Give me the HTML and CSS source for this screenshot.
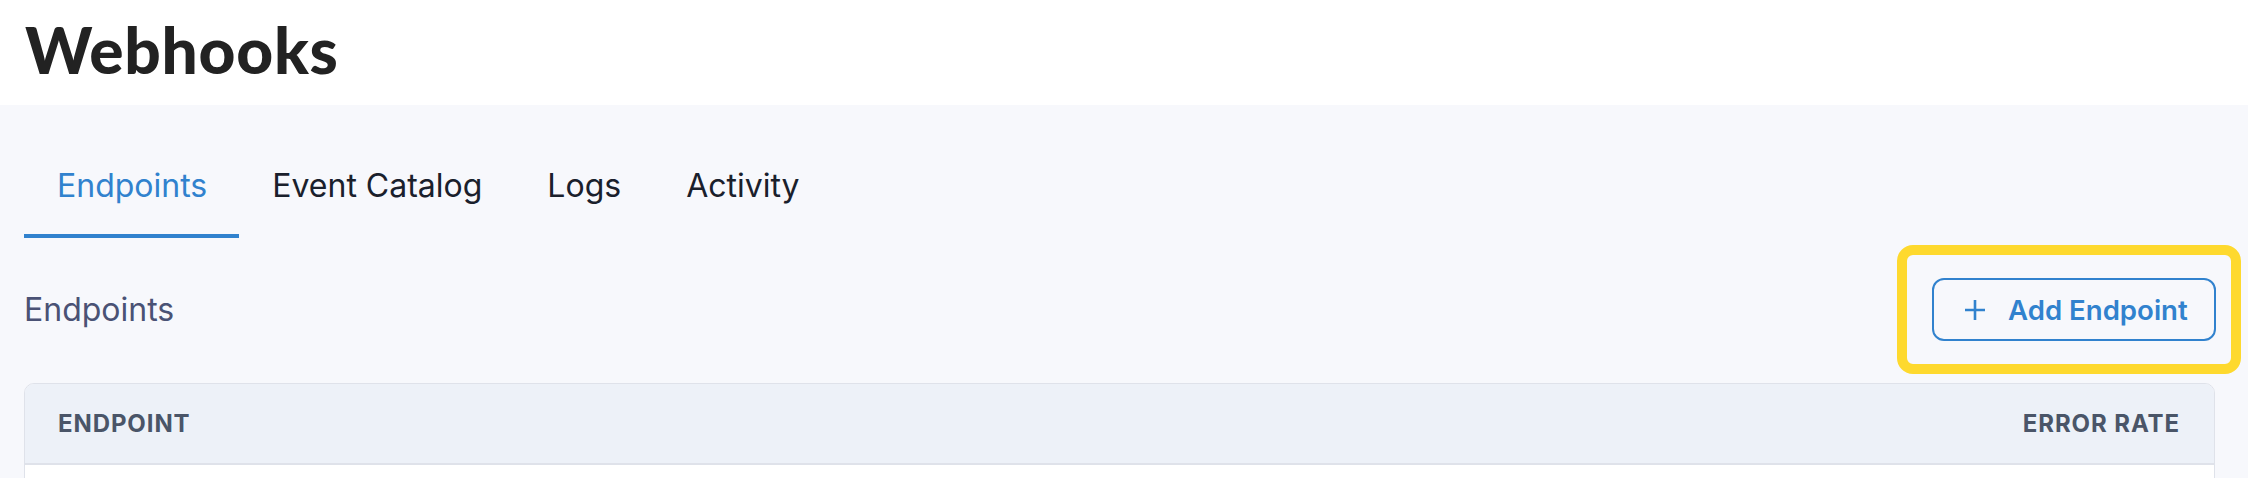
FILE: index.html
```html
<!DOCTYPE html>
<html lang="en">
<head>
<meta charset="utf-8">
<title>Webhooks</title>
<link rel="stylesheet" href="styles.css">
</head>
<body>
  <header class="topbar">
    <h1 class="page-title">Webhooks</h1>
  </header>
  <main class="content">
    <nav class="tabs">
      <a class="tab tab-active">Endpoints</a>
      <a class="tab">Event Catalog</a>
      <a class="tab">Logs</a>
      <a class="tab">Activity</a>
    </nav>
    <div class="section-head">
      <h2 class="section-title">Endpoints</h2>
      <div class="btn-wrap">
        <button class="btn-add">
          <svg class="plus" width="22" height="22" viewBox="0 0 22 22"><path d="M11 1v20M1 11h20" stroke="#3182ce" stroke-width="2.6" fill="none"/></svg>
          <span>Add Endpoint</span>
        </button>
        <span class="highlight"></span>
      </div>
    </div>
    <section class="card">
      <div class="card-head">
        <span class="col">Endpoint</span>
        <span class="col">Error Rate</span>
      </div>
      <div class="card-body"></div>
    </section>
  </main>
</body>
</html>
```
FILE: styles.css
```css
html, body {
  margin: 0;
  padding: 0;
}
body {
  background: #f7f8fc;
  font-family: Inter, "Noto Sans", sans-serif;
  overflow: hidden;
}
.topbar {
  background: #ffffff;
  height: 105px;
  box-sizing: border-box;
  padding: 18px 0 0 25px;
}
.page-title {
  margin: 0;
  font-family: Lato, "Noto Sans", sans-serif;
  font-weight: 900;
  font-size: 64px;
  line-height: 64px;
  color: #222222;
  letter-spacing: 0.7px;
}
.content {
  padding: 63px 33px 0 24px;
}
.tabs {
  display: flex;
}
.tab {
  display: block;
  padding: 0 32px 30px 33px;
  font-size: 32px;
  line-height: 36px;
  color: #1a202c;
  border-bottom: 4px solid transparent;
}
.tab-active {
  color: #3182ce;
  border-bottom-color: #3182ce;
}
.section-head {
  display: flex;
  align-items: center;
  justify-content: space-between;
  margin-top: 40px;
  height: 63px;
}
.section-title {
  margin: 0;
  font-weight: 400;
  font-size: 32px;
  line-height: 36px;
  color: #4a5275;
}
.btn-wrap {
  position: relative;
  margin-right: -1px;
}
.btn-add {
  display: flex;
  align-items: center;
  gap: 22px;
  width: 284px;
  height: 63px;
  box-sizing: border-box;
  padding: 0 0 0 30px;
  background: transparent;
  border: 2px solid #3182ce;
  border-radius: 12px;
  font-family: Inter, "Noto Sans", sans-serif;
  font-weight: 600;
  font-size: 27.6px;
  color: #3182ce;
}
.plus {
  display: block;
}
.highlight {
  position: absolute;
  left: -35px;
  top: -33px;
  right: -25px;
  bottom: -33px;
  border: 10px solid #fed92e;
  border-radius: 16px;
  pointer-events: none;
}
.card {
  margin-top: 42px;
  border: 1px solid #dfe2ea;
  border-radius: 10px 10px 0 0;
  overflow: hidden;
}
.card-head {
  display: flex;
  justify-content: space-between;
  align-items: center;
  height: 79px;
  padding: 0 34px 0 33px;
  background: #edf1f8;
  border-bottom: 2px solid #dfe2ea;
}
.col {
  font-weight: 700;
  font-size: 24px;
  letter-spacing: 0.9px;
  text-transform: uppercase;
  color: #4a5568;
}
.card-body {
  background: #ffffff;
  height: 200px;
}
```
